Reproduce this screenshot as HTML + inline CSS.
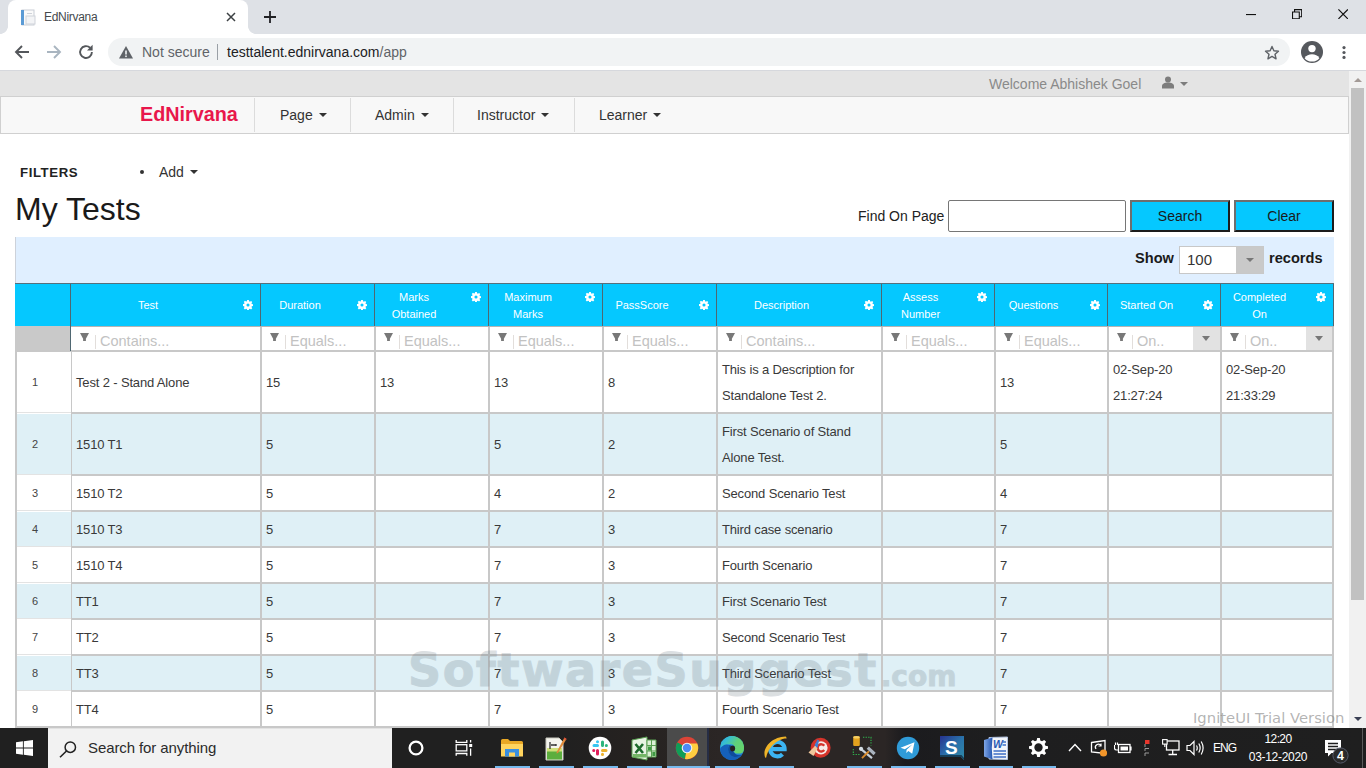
<!DOCTYPE html>
<html lang="en">
<head>
<meta charset="utf-8">
<title>EdNirvana</title>
<style>
*{box-sizing:border-box;margin:0;padding:0}
html,body{width:1366px;height:768px;overflow:hidden;background:#fff}
body{position:relative;font-family:"Liberation Sans",Arial,sans-serif;color:#222}
.abs{position:absolute}
/* ---------- chrome frame ---------- */
#tabstrip{left:0;top:0;width:1366px;height:34px;background:#dee1e6}
#tab{left:8px;top:0;width:240px;height:34px;background:#fff;border-radius:8px 8px 0 0}
#tab .title{left:36px;top:10px;font-size:12px;color:#45494d;letter-spacing:-.3px}
#toolbar{left:0;top:34px;width:1366px;height:37px;background:#fff;border-bottom:1px solid #d6d8dd}
#omni{left:108px;top:38px;width:1182px;height:28px;border-radius:14px;background:#f1f3f4}
#omni .ns{left:34px;top:6px;font-size:14px;color:#5f6368}
#omni .sep{left:109px;top:6px;width:1px;height:16px;background:#9aa0a6}
#omni .url{left:119px;top:6px;font-size:14px;color:#202124}
#omni .url span{color:#5f6368}
/* ---------- page ---------- */
#page{left:0;top:70px;width:1349px;height:658px;background:#fff;overflow:hidden}
#topbar{left:0;top:0;width:1349px;height:27px;background:#e4e4e4}
#topbar .welcome{left:989px;top:6px;font-size:14px;color:#8a8a8a}
#navbar{left:0;top:26px;width:1349px;height:38px;background:#f8f8f8;border:1px solid #d0d0d0}
#navbar .brand{left:139px;top:6px;font-size:19.8px;font-weight:bold;color:#e8174b}
#navbar .div{top:1px;width:1px;height:34px;background:#dcdcdc}
#navbar .item{top:10px;font-size:14px;color:#333}
.caret{display:inline-block;width:0;height:0;border-left:4px solid transparent;border-right:4px solid transparent;border-top:4px solid #333;vertical-align:middle;margin-left:2px;position:relative;top:-1px}
#filters{left:20px;top:95px;font-size:13.2px;font-weight:bold;color:#222;letter-spacing:.6px}
#bullet{left:140px;top:100px;width:4px;height:4px;border-radius:50%;background:#333}
#add{left:159px;top:94px;font-size:14px;color:#333}
#h1{left:15px;top:120px;font-size:32px;color:#1a1a1a;line-height:38px}
#find{left:858px;top:138px;font-size:14px;color:#222}
#findbox{left:948px;top:130px;width:178px;height:32px;border:1px solid #767676;border-radius:2px;background:#fff}
.btn{top:130px;width:100px;height:32px;background:#05c8ff;border:2px solid;border-color:#6e6e6e #1c1c1c #1c1c1c #6e6e6e;font-size:14px;color:#1a1a1a;text-align:center;line-height:28px}

/* ---------- grid ---------- */
.seg{font-family:"Liberation Sans",Arial,sans-serif}
#pager{background:#e0efff;border-left:1px solid #cdd2da}
.pgt{font-size:14.6px;font-weight:bold;color:#1a1a1a;line-height:22px}
#psel{width:85px;height:28px;background:#fff;border:1px solid #c8c8c8}
#psel span{position:absolute;left:7px;top:4px;font-size:15px;color:#333}
#psel i{position:absolute;right:0;top:0;width:27px;height:26px;background:#c9c9c9}
#psel i:after{content:"";position:absolute;left:10px;top:11px;border-left:4px solid transparent;border-right:4px solid transparent;border-top:4px solid #777}
#ghead{background:#05c8ff;border-top:1px solid #56707c}
#gfilt{background:#fff;border-top:1px solid #b5b5b5;border-bottom:2px solid #c8c8c8}
.hline{width:1px;background:#4f6772}
.hc{height:42px;display:flex;align-items:center;justify-content:center;text-align:center;color:#fff;font-size:11px;line-height:17px}
.hc.two{padding-top:1.5px}
.gear{width:10px;height:10px;display:block}
.fun{width:9px;height:8px;display:block}
.fpipe{width:1px;height:13.5px;background:#e2dedb}
.ftxt{font-size:14.5px;color:#c2c2c2;line-height:20px}
.fdd{width:27px;height:23px;background:#e2e2e2}
.fdd i{position:absolute;left:9px;top:9px;border-left:4.500px solid transparent;border-right:4.5px solid transparent;border-top:5px solid #777}
.grow{left:17px;width:1316px;background:#fff}
.grow.alt{background:#dff0f6}
.rnum{left:17px;width:54px;display:flex;align-items:center;justify-content:center;font-size:11px;color:#444;padding-right:18px;padding-top:0}
.gc{display:flex;align-items:center;font-size:13px;color:#393939;line-height:26px;white-space:nowrap;letter-spacing:-.15px;padding-top:2px}
.rline{left:72px;width:1262px;height:2px;background:#c8c8c8}
.rline0{left:17px;width:54px;height:1px;background:#e3e3e3}
.vline{width:2px;height:400px;background:#c8c8c8}

/* ---------- taskbar ---------- */
#taskbar{left:0;top:728px;width:1366px;height:40px;background:linear-gradient(90deg,#202020 0,#202020 560px,#262220 640px,#2b2625 720px,#2b2625 885px,#1b1b1e 905px,#1e1e1f 1000px,#1f1f1f 1366px);overflow:hidden}
#tsearch{left:48px;top:0;width:344px;height:40px;background:#f2f2f2;border-top:1px solid #e2e2e2}
.ul{top:38px;width:35px;height:2px;background:#76b9ed}
.tt{font-size:12px;color:#fff;white-space:nowrap;line-height:14px}
/* scrollbar */
#sb{left:1349px;top:71px;width:17px;height:657px;background:#f1f1f1}
#sb .thumb{left:2px;top:17px;width:13px;height:512px;background:#c1c1c1}

#wm{left:408px;top:572px;font-family:"DejaVu Sans","Liberation Sans",sans-serif;font-weight:bold;font-size:46px;line-height:56px;color:#5c6b78;-webkit-text-stroke:1px #5c6b78;opacity:.21;white-space:nowrap;letter-spacing:1.55px}
#wm span{font-size:28px;letter-spacing:0;margin-left:3px}
#ign{left:1193px;top:639px;font-family:"DejaVu Sans","Liberation Sans",sans-serif;font-size:14.8px;line-height:18px;color:rgba(130,130,130,.6);white-space:nowrap}

.flare{top:26px;width:8px;height:8px}
</style>
</head>
<body>
<!-- ===== Chrome tab strip ===== -->
<div id="tabstrip" class="abs"></div>
<div class="abs flare" style="left:0;background:radial-gradient(circle at 0 0,#dee1e6 7.6px,#fff 8.2px)"></div><div class="abs flare" style="left:248px;background:radial-gradient(circle at 100% 0,#dee1e6 7.6px,#fff 8.2px)"></div>
<div id="tab" class="abs">
  <svg class="abs" style="left:12px;top:9px" width="18" height="17" viewBox="0 0 18 17"><rect x="2" y="1" width="12" height="15" fill="#fafafa" stroke="#c9ced6" stroke-width="1"/><rect x="1" y="1" width="3" height="15" fill="#5b9bd5"/><rect x="6" y="7" width="9" height="8" fill="#f3f4f6" stroke="#cfd3da" stroke-width="1"/><rect x="7" y="4" width="5" height="1" fill="#cfd3da"/></svg>
  <div class="abs title">EdNirvana</div>
  <svg class="abs" style="left:218px;top:12px" width="10" height="10" viewBox="0 0 10 10"><path d="M1 1L9 9M9 1L1 9" stroke="#3c4043" stroke-width="1.5" fill="none"/></svg>
</div>
<svg class="abs" style="left:263px;top:10px" width="14" height="14" viewBox="0 0 14 14"><path d="M7 1V13M1 7H13" stroke="#202124" stroke-width="1.8" fill="none"/></svg>
<!-- window controls -->
<svg class="abs" style="left:1246px;top:14px" width="12" height="2"><rect width="10" height="1.100" fill="#111"/></svg>
<svg class="abs" style="left:1292px;top:9px" width="10.300" height="10.300" viewBox="0 0 12 12"><path d="M.600 3.500H8.500V11.400H.600ZM3 3.500V.700H11.300V9H8.500" stroke="#111" stroke-width="1.300" fill="none"/></svg>
<svg class="abs" style="left:1338px;top:9px" width="10.300" height="10.300" viewBox="0 0 12 12"><path d="M.500 .500L11.500 11.500M11.500 .500L.500 11.500" stroke="#111" stroke-width="1.400" fill="none"/></svg>
<!-- ===== Toolbar ===== -->
<div id="toolbar" class="abs"></div>
<svg class="abs" style="left:14px;top:44px" width="16" height="16" viewBox="0 0 16 16"><path d="M15 8H2.500M8 2L2 8L8 14" stroke="#54575b" stroke-width="1.9" fill="none"/></svg>
<svg class="abs" style="left:46px;top:44px" width="16" height="16" viewBox="0 0 16 16"><path d="M1 8H13.5M8 2L14 8L8 14" stroke="#a9b5c0" stroke-width="1.9" fill="none"/></svg>
<svg class="abs" style="left:78px;top:44px" width="16" height="16" viewBox="0 0 16 16"><path d="M13.900 8A5.900 5.900 0 1 1 12.100 3.800" stroke="#54575b" stroke-width="1.900" fill="none"/><path d="M14.600 .800V6.400H9Z" fill="#54575b"/></svg>
<div id="omni" class="abs">
  <svg class="abs" style="left:11px;top:8px" width="14" height="13" viewBox="0 0 14 13"><path d="M7 0L14 12.5H0Z" fill="#5f6368"/><rect x="6.2" y="4.5" width="1.6" height="4" fill="#f1f3f4"/><rect x="6.2" y="9.5" width="1.6" height="1.6" fill="#f1f3f4"/></svg>
  <div class="abs ns">Not secure</div>
  <div class="abs sep"></div>
  <div class="abs url">testtalent.ednirvana.com<span>/app</span></div>
  <svg class="abs" style="left:1156px;top:6.500px" width="16" height="15" viewBox="0 0 17 16"><path d="M8.5 1.6L10.5 6.1L15.4 6.6L11.7 9.9L12.8 14.7L8.5 12.2L4.2 14.7L5.3 9.9L1.6 6.6L6.5 6.1Z" stroke="#5f6368" stroke-width="1.5" fill="none" stroke-linejoin="round"/></svg>
</div>
<svg class="abs" style="left:1300px;top:40px" width="24" height="24" viewBox="0 0 24 24"><circle cx="12" cy="12" r="11" fill="#55585d"/><circle cx="12" cy="8.6" r="3.7" fill="#fff"/><path d="M4.6 18.2C6.2 15.4 9 14.3 12 14.3S17.8 15.4 19.4 18.2C17.6 20.4 15 21.6 12 21.6S6.4 20.4 4.6 18.2Z" fill="#fff"/></svg>
<svg class="abs" style="left:1342px;top:45px" width="4" height="15" viewBox="0 0 4 15"><circle cx="2" cy="2.600" r="1.600" fill="#55585d"/><circle cx="2" cy="7.500" r="1.600" fill="#55585d"/><circle cx="2" cy="12.400" r="1.600" fill="#55585d"/></svg>

<!-- ===== Page ===== -->
<div id="page" class="abs">
  <div id="topbar" class="abs">
    <div class="abs welcome">Welcome Abhishek Goel</div>
    <svg class="abs" style="left:1162px;top:6px" width="12" height="13" viewBox="0 0 12 13"><circle cx="6" cy="3.6" r="3" fill="#7d7d7d"/><path d="M0 12.5V10C0 7.6 2.5 6.4 6 6.4S12 7.6 12 10V12.5Z" fill="#7d7d7d"/></svg>
    <svg class="abs" style="left:1180px;top:12px" width="8" height="4.500" viewBox="0 0 9 5"><path d="M0 0H9L4.500 4.500Z" fill="#7d7d7d"/></svg>
  </div>
  <div id="navbar" class="abs">
    <div class="abs brand">EdNirvana</div>
    <div class="abs div" style="left:253px"></div>
    <div class="abs item" style="left:279px">Page <span class="caret"></span></div>
    <div class="abs div" style="left:349px"></div>
    <div class="abs item" style="left:374px">Admin <span class="caret"></span></div>
    <div class="abs div" style="left:452px"></div>
    <div class="abs item" style="left:476px">Instructor <span class="caret"></span></div>
    <div class="abs div" style="left:573px"></div>
    <div class="abs item" style="left:598px">Learner <span class="caret"></span></div>
  </div>
  <div id="filters" class="abs">FILTERS</div>
  <div id="bullet" class="abs"></div>
  <div id="add" class="abs">Add <span class="caret"></span></div>
  <div id="h1" class="abs">My Tests</div>
  <div id="find" class="abs">Find On Page</div>
  <div id="findbox" class="abs"></div>
  <div class="abs btn" style="left:1130px">Search</div>
  <div class="abs btn" style="left:1234px">Clear</div>
  <!--GRID-->
  <div class="abs" id="pager" style="left:15px;top:167px;width:1319px;height:46px"></div>
  <div class="abs pgt" style="left:1135px;top:177px">Show</div>
  <div class="abs" id="psel" style="left:1179px;top:176px"><span>100</span><i></i></div>
  <div class="abs pgt" style="left:1269px;top:177px">records</div>
  <div class="abs" id="ghead" style="left:15px;top:213px;width:1319px;height:43px"></div>
  <div class="abs" id="gfilt" style="left:15px;top:256px;width:1319px;height:26px"></div>
  <div class="abs" style="left:15px;top:256px;width:55px;height:24px;background:#c9c9c9"></div>
  <div class="abs hline" style="left:70px;top:214px;height:67px"></div>
  <div class="abs hc" style="left:71px;top:214px;width:154px">Test</div>
  <div class="abs" style="left:243px;top:229.5px"><svg class="gear" viewBox="0 0 20 20"><path fill="#fff" fill-rule="evenodd" d="M8.3 0h3.4l.5 2.6 1.7.7L16.1 1.8l2.4 2.4-1.5 2.2.7 1.7 2.6.5v3.4l-2.6.5-.7 1.7 1.5 2.2-2.4 2.4-2.2-1.5-1.7.7-.5 2.6H8.3l-.5-2.6-1.7-.7-2.2 1.5-2.4-2.4 1.5-2.2-.7-1.7L-.3 11.7V8.3l2.6-.5.7-1.7L1.5 3.9 3.9 1.5l2.2 1.5 1.7-.7ZM10 6.900a3.100 3.100 0 1 0 0 6.200 3.100 3.100 0 0 0 0-6.200Z"/></svg></div>
  <div class="abs" style="left:80px;top:263.4px"><svg class="fun" viewBox="0 0 9 8"><path fill="#787878" d="M0 0H9L5.900 5.800V8H3.100V5.800Z"/></svg></div>
  <div class="abs fpipe" style="left:95px;top:265px"></div>
  <div class="abs ftxt" style="left:100px;top:261px">Contains...</div>
  <div class="abs hline" style="left:260px;top:214px;height:42px"></div>
  <div class="abs hc" style="left:261px;top:214px;width:78px">Duration</div>
  <div class="abs" style="left:357px;top:229.5px"><svg class="gear" viewBox="0 0 20 20"><path fill="#fff" fill-rule="evenodd" d="M8.3 0h3.4l.5 2.6 1.7.7L16.1 1.8l2.4 2.4-1.5 2.2.7 1.7 2.6.5v3.4l-2.6.5-.7 1.7 1.5 2.2-2.4 2.4-2.2-1.5-1.7.7-.5 2.6H8.3l-.5-2.6-1.7-.7-2.2 1.5-2.4-2.4 1.5-2.2-.7-1.7L-.3 11.7V8.3l2.6-.5.7-1.7L1.5 3.9 3.9 1.5l2.2 1.5 1.7-.7ZM10 6.900a3.100 3.100 0 1 0 0 6.200 3.100 3.100 0 0 0 0-6.200Z"/></svg></div>
  <div class="abs" style="left:270px;top:263.4px"><svg class="fun" viewBox="0 0 9 8"><path fill="#787878" d="M0 0H9L5.900 5.800V8H3.100V5.800Z"/></svg></div>
  <div class="abs fpipe" style="left:285px;top:265px"></div>
  <div class="abs ftxt" style="left:290px;top:261px">Equals...</div>
  <div class="abs hline" style="left:374px;top:214px;height:42px"></div>
  <div class="abs hc two" style="left:375px;top:214px;width:78px">Marks<br>Obtained</div>
  <div class="abs" style="left:471px;top:221.5px"><svg class="gear" viewBox="0 0 20 20"><path fill="#fff" fill-rule="evenodd" d="M8.3 0h3.4l.5 2.6 1.7.7L16.1 1.8l2.4 2.4-1.5 2.2.7 1.7 2.6.5v3.4l-2.6.5-.7 1.7 1.5 2.2-2.4 2.4-2.2-1.5-1.7.7-.5 2.6H8.3l-.5-2.6-1.7-.7-2.2 1.5-2.4-2.4 1.5-2.2-.7-1.7L-.3 11.7V8.3l2.6-.5.7-1.7L1.5 3.9 3.9 1.5l2.2 1.5 1.7-.7ZM10 6.900a3.100 3.100 0 1 0 0 6.200 3.100 3.100 0 0 0 0-6.200Z"/></svg></div>
  <div class="abs" style="left:384px;top:263.4px"><svg class="fun" viewBox="0 0 9 8"><path fill="#787878" d="M0 0H9L5.900 5.800V8H3.100V5.800Z"/></svg></div>
  <div class="abs fpipe" style="left:399px;top:265px"></div>
  <div class="abs ftxt" style="left:404px;top:261px">Equals...</div>
  <div class="abs hline" style="left:488px;top:214px;height:42px"></div>
  <div class="abs hc two" style="left:489px;top:214px;width:78px">Maximum<br>Marks</div>
  <div class="abs" style="left:585px;top:221.5px"><svg class="gear" viewBox="0 0 20 20"><path fill="#fff" fill-rule="evenodd" d="M8.3 0h3.4l.5 2.6 1.7.7L16.1 1.8l2.4 2.4-1.5 2.2.7 1.7 2.6.5v3.4l-2.6.5-.7 1.7 1.5 2.2-2.4 2.4-2.2-1.5-1.7.7-.5 2.6H8.3l-.5-2.6-1.7-.7-2.2 1.5-2.4-2.4 1.5-2.2-.7-1.7L-.3 11.7V8.3l2.6-.5.7-1.7L1.5 3.9 3.9 1.5l2.2 1.5 1.7-.7ZM10 6.900a3.100 3.100 0 1 0 0 6.200 3.100 3.100 0 0 0 0-6.200Z"/></svg></div>
  <div class="abs" style="left:498px;top:263.4px"><svg class="fun" viewBox="0 0 9 8"><path fill="#787878" d="M0 0H9L5.900 5.800V8H3.100V5.800Z"/></svg></div>
  <div class="abs fpipe" style="left:513px;top:265px"></div>
  <div class="abs ftxt" style="left:518px;top:261px">Equals...</div>
  <div class="abs hline" style="left:602px;top:214px;height:42px"></div>
  <div class="abs hc" style="left:603px;top:214px;width:78px">PassScore</div>
  <div class="abs" style="left:699px;top:229.5px"><svg class="gear" viewBox="0 0 20 20"><path fill="#fff" fill-rule="evenodd" d="M8.3 0h3.4l.5 2.6 1.7.7L16.1 1.8l2.4 2.4-1.5 2.2.7 1.7 2.6.5v3.4l-2.6.5-.7 1.7 1.5 2.2-2.4 2.4-2.2-1.5-1.7.7-.5 2.6H8.3l-.5-2.6-1.7-.7-2.2 1.5-2.4-2.4 1.5-2.2-.7-1.7L-.3 11.7V8.3l2.6-.5.7-1.7L1.5 3.9 3.9 1.5l2.2 1.5 1.7-.7ZM10 6.900a3.100 3.100 0 1 0 0 6.200 3.100 3.100 0 0 0 0-6.200Z"/></svg></div>
  <div class="abs" style="left:612px;top:263.4px"><svg class="fun" viewBox="0 0 9 8"><path fill="#787878" d="M0 0H9L5.900 5.800V8H3.100V5.800Z"/></svg></div>
  <div class="abs fpipe" style="left:627px;top:265px"></div>
  <div class="abs ftxt" style="left:632px;top:261px">Equals...</div>
  <div class="abs hline" style="left:716px;top:214px;height:42px"></div>
  <div class="abs hc" style="left:717px;top:214px;width:129px">Description</div>
  <div class="abs" style="left:864px;top:229.5px"><svg class="gear" viewBox="0 0 20 20"><path fill="#fff" fill-rule="evenodd" d="M8.3 0h3.4l.5 2.6 1.7.7L16.1 1.8l2.4 2.4-1.5 2.2.7 1.7 2.6.5v3.4l-2.6.5-.7 1.7 1.5 2.2-2.4 2.4-2.2-1.5-1.7.7-.5 2.6H8.3l-.5-2.6-1.7-.7-2.2 1.5-2.4-2.4 1.5-2.2-.7-1.7L-.3 11.7V8.3l2.6-.5.7-1.7L1.5 3.9 3.9 1.5l2.2 1.5 1.7-.7ZM10 6.900a3.100 3.100 0 1 0 0 6.200 3.100 3.100 0 0 0 0-6.200Z"/></svg></div>
  <div class="abs" style="left:726px;top:263.4px"><svg class="fun" viewBox="0 0 9 8"><path fill="#787878" d="M0 0H9L5.900 5.800V8H3.100V5.800Z"/></svg></div>
  <div class="abs fpipe" style="left:741px;top:265px"></div>
  <div class="abs ftxt" style="left:746px;top:261px">Contains...</div>
  <div class="abs hline" style="left:881px;top:214px;height:42px"></div>
  <div class="abs hc two" style="left:882px;top:214px;width:77px">Assess<br>Number</div>
  <div class="abs" style="left:977px;top:221.5px"><svg class="gear" viewBox="0 0 20 20"><path fill="#fff" fill-rule="evenodd" d="M8.3 0h3.4l.5 2.6 1.7.7L16.1 1.8l2.4 2.4-1.5 2.2.7 1.7 2.6.5v3.4l-2.6.5-.7 1.7 1.5 2.2-2.4 2.4-2.2-1.5-1.7.7-.5 2.6H8.3l-.5-2.6-1.7-.7-2.2 1.5-2.4-2.4 1.5-2.2-.7-1.7L-.3 11.7V8.3l2.6-.5.7-1.7L1.5 3.9 3.9 1.5l2.2 1.5 1.7-.7ZM10 6.900a3.100 3.100 0 1 0 0 6.200 3.100 3.100 0 0 0 0-6.200Z"/></svg></div>
  <div class="abs" style="left:891px;top:263.4px"><svg class="fun" viewBox="0 0 9 8"><path fill="#787878" d="M0 0H9L5.900 5.800V8H3.100V5.800Z"/></svg></div>
  <div class="abs fpipe" style="left:906px;top:265px"></div>
  <div class="abs ftxt" style="left:911px;top:261px">Equals...</div>
  <div class="abs hline" style="left:994px;top:214px;height:42px"></div>
  <div class="abs hc" style="left:995px;top:214px;width:77px">Questions</div>
  <div class="abs" style="left:1090px;top:229.5px"><svg class="gear" viewBox="0 0 20 20"><path fill="#fff" fill-rule="evenodd" d="M8.3 0h3.4l.5 2.6 1.7.7L16.1 1.8l2.4 2.4-1.5 2.2.7 1.7 2.6.5v3.4l-2.6.5-.7 1.7 1.5 2.2-2.4 2.4-2.2-1.5-1.7.7-.5 2.6H8.3l-.5-2.6-1.7-.7-2.2 1.5-2.4-2.4 1.5-2.2-.7-1.7L-.3 11.7V8.3l2.6-.5.7-1.7L1.5 3.9 3.9 1.5l2.2 1.5 1.7-.7ZM10 6.900a3.100 3.100 0 1 0 0 6.200 3.100 3.100 0 0 0 0-6.200Z"/></svg></div>
  <div class="abs" style="left:1004px;top:263.4px"><svg class="fun" viewBox="0 0 9 8"><path fill="#787878" d="M0 0H9L5.900 5.800V8H3.100V5.800Z"/></svg></div>
  <div class="abs fpipe" style="left:1019px;top:265px"></div>
  <div class="abs ftxt" style="left:1024px;top:261px">Equals...</div>
  <div class="abs hline" style="left:1107px;top:214px;height:42px"></div>
  <div class="abs hc" style="left:1108px;top:214px;width:77px">Started On</div>
  <div class="abs" style="left:1203px;top:229.5px"><svg class="gear" viewBox="0 0 20 20"><path fill="#fff" fill-rule="evenodd" d="M8.3 0h3.4l.5 2.6 1.7.7L16.1 1.8l2.4 2.4-1.5 2.2.7 1.7 2.6.5v3.4l-2.6.5-.7 1.7 1.5 2.2-2.4 2.4-2.2-1.5-1.7.7-.5 2.6H8.3l-.5-2.6-1.7-.7-2.2 1.5-2.4-2.4 1.5-2.2-.7-1.7L-.3 11.7V8.3l2.6-.5.7-1.7L1.5 3.9 3.9 1.5l2.2 1.5 1.7-.7ZM10 6.900a3.100 3.100 0 1 0 0 6.200 3.100 3.100 0 0 0 0-6.200Z"/></svg></div>
  <div class="abs" style="left:1117px;top:263.4px"><svg class="fun" viewBox="0 0 9 8"><path fill="#787878" d="M0 0H9L5.900 5.800V8H3.100V5.800Z"/></svg></div>
  <div class="abs fpipe" style="left:1132px;top:265px"></div>
  <div class="abs ftxt" style="left:1137px;top:261px">On..</div>
  <div class="abs fdd" style="left:1193px;top:257px"><i></i></div>
  <div class="abs hline" style="left:1220px;top:214px;height:42px"></div>
  <div class="abs hc two" style="left:1221px;top:214px;width:77px">Completed<br>On</div>
  <div class="abs" style="left:1316px;top:221.5px"><svg class="gear" viewBox="0 0 20 20"><path fill="#fff" fill-rule="evenodd" d="M8.3 0h3.4l.5 2.6 1.7.7L16.1 1.8l2.4 2.4-1.5 2.2.7 1.7 2.6.5v3.4l-2.6.5-.7 1.7 1.5 2.2-2.4 2.4-2.2-1.5-1.7.7-.5 2.6H8.3l-.5-2.6-1.7-.7-2.2 1.5-2.4-2.4 1.5-2.2-.7-1.7L-.3 11.7V8.3l2.6-.5.7-1.7L1.5 3.9 3.9 1.5l2.2 1.5 1.7-.7ZM10 6.900a3.100 3.100 0 1 0 0 6.200 3.100 3.100 0 0 0 0-6.200Z"/></svg></div>
  <div class="abs" style="left:1230px;top:263.4px"><svg class="fun" viewBox="0 0 9 8"><path fill="#787878" d="M0 0H9L5.900 5.800V8H3.100V5.800Z"/></svg></div>
  <div class="abs fpipe" style="left:1245px;top:265px"></div>
  <div class="abs ftxt" style="left:1250px;top:261px">On..</div>
  <div class="abs fdd" style="left:1306px;top:257px"><i></i></div>
  <div class="abs hline" style="left:1333px;top:214px;height:42px"></div>
  <div class="abs grow" style="top:282px;height:60px"></div>
  <div class="abs rnum" style="top:282px;height:60px">1</div>
  <div class="abs gc" style="left:76px;top:282px;height:60px"><span>Test 2 - Stand Alone</span></div>
  <div class="abs gc" style="left:266px;top:282px;height:60px"><span>15</span></div>
  <div class="abs gc" style="left:380px;top:282px;height:60px"><span>13</span></div>
  <div class="abs gc" style="left:494px;top:282px;height:60px"><span>13</span></div>
  <div class="abs gc" style="left:608px;top:282px;height:60px"><span>8</span></div>
  <div class="abs gc" style="left:722px;top:282px;height:60px"><span>This is a Description for<br>Standalone Test 2.</span></div>
  <div class="abs gc" style="left:1000px;top:282px;height:60px"><span>13</span></div>
  <div class="abs gc" style="left:1113px;top:282px;height:60px"><span>02-Sep-20<br>21:27:24</span></div>
  <div class="abs gc" style="left:1226px;top:282px;height:60px"><span>02-Sep-20<br>21:33:29</span></div>
  <div class="abs rline" style="top:342px"></div>
  <div class="abs rline0" style="top:342px"></div>
  <div class="abs grow alt" style="top:344px;height:60px"></div>
  <div class="abs rnum" style="top:344px;height:60px">2</div>
  <div class="abs gc" style="left:76px;top:344px;height:60px"><span>1510 T1</span></div>
  <div class="abs gc" style="left:266px;top:344px;height:60px"><span>5</span></div>
  <div class="abs gc" style="left:494px;top:344px;height:60px"><span>5</span></div>
  <div class="abs gc" style="left:608px;top:344px;height:60px"><span>2</span></div>
  <div class="abs gc" style="left:722px;top:344px;height:60px"><span>First Scenario of Stand<br>Alone Test.</span></div>
  <div class="abs gc" style="left:1000px;top:344px;height:60px"><span>5</span></div>
  <div class="abs rline" style="top:404px"></div>
  <div class="abs rline0" style="top:404px"></div>
  <div class="abs grow" style="top:406px;height:34px"></div>
  <div class="abs rnum" style="top:406px;height:34px">3</div>
  <div class="abs gc" style="left:76px;top:406px;height:34px"><span>1510 T2</span></div>
  <div class="abs gc" style="left:266px;top:406px;height:34px"><span>5</span></div>
  <div class="abs gc" style="left:494px;top:406px;height:34px"><span>4</span></div>
  <div class="abs gc" style="left:608px;top:406px;height:34px"><span>2</span></div>
  <div class="abs gc" style="left:722px;top:406px;height:34px"><span>Second Scenario Test</span></div>
  <div class="abs gc" style="left:1000px;top:406px;height:34px"><span>4</span></div>
  <div class="abs rline" style="top:440px"></div>
  <div class="abs rline0" style="top:440px"></div>
  <div class="abs grow alt" style="top:442px;height:34px"></div>
  <div class="abs rnum" style="top:442px;height:34px">4</div>
  <div class="abs gc" style="left:76px;top:442px;height:34px"><span>1510 T3</span></div>
  <div class="abs gc" style="left:266px;top:442px;height:34px"><span>5</span></div>
  <div class="abs gc" style="left:494px;top:442px;height:34px"><span>7</span></div>
  <div class="abs gc" style="left:608px;top:442px;height:34px"><span>3</span></div>
  <div class="abs gc" style="left:722px;top:442px;height:34px"><span>Third case scenario</span></div>
  <div class="abs gc" style="left:1000px;top:442px;height:34px"><span>7</span></div>
  <div class="abs rline" style="top:476px"></div>
  <div class="abs rline0" style="top:476px"></div>
  <div class="abs grow" style="top:478px;height:34px"></div>
  <div class="abs rnum" style="top:478px;height:34px">5</div>
  <div class="abs gc" style="left:76px;top:478px;height:34px"><span>1510 T4</span></div>
  <div class="abs gc" style="left:266px;top:478px;height:34px"><span>5</span></div>
  <div class="abs gc" style="left:494px;top:478px;height:34px"><span>7</span></div>
  <div class="abs gc" style="left:608px;top:478px;height:34px"><span>3</span></div>
  <div class="abs gc" style="left:722px;top:478px;height:34px"><span>Fourth Scenario</span></div>
  <div class="abs gc" style="left:1000px;top:478px;height:34px"><span>7</span></div>
  <div class="abs rline" style="top:512px"></div>
  <div class="abs rline0" style="top:512px"></div>
  <div class="abs grow alt" style="top:514px;height:34px"></div>
  <div class="abs rnum" style="top:514px;height:34px">6</div>
  <div class="abs gc" style="left:76px;top:514px;height:34px"><span>TT1</span></div>
  <div class="abs gc" style="left:266px;top:514px;height:34px"><span>5</span></div>
  <div class="abs gc" style="left:494px;top:514px;height:34px"><span>7</span></div>
  <div class="abs gc" style="left:608px;top:514px;height:34px"><span>3</span></div>
  <div class="abs gc" style="left:722px;top:514px;height:34px"><span>First Scenario Test</span></div>
  <div class="abs gc" style="left:1000px;top:514px;height:34px"><span>7</span></div>
  <div class="abs rline" style="top:548px"></div>
  <div class="abs rline0" style="top:548px"></div>
  <div class="abs grow" style="top:550px;height:34px"></div>
  <div class="abs rnum" style="top:550px;height:34px">7</div>
  <div class="abs gc" style="left:76px;top:550px;height:34px"><span>TT2</span></div>
  <div class="abs gc" style="left:266px;top:550px;height:34px"><span>5</span></div>
  <div class="abs gc" style="left:494px;top:550px;height:34px"><span>7</span></div>
  <div class="abs gc" style="left:608px;top:550px;height:34px"><span>3</span></div>
  <div class="abs gc" style="left:722px;top:550px;height:34px"><span>Second Scenario Test</span></div>
  <div class="abs gc" style="left:1000px;top:550px;height:34px"><span>7</span></div>
  <div class="abs rline" style="top:584px"></div>
  <div class="abs rline0" style="top:584px"></div>
  <div class="abs grow alt" style="top:586px;height:34px"></div>
  <div class="abs rnum" style="top:586px;height:34px">8</div>
  <div class="abs gc" style="left:76px;top:586px;height:34px"><span>TT3</span></div>
  <div class="abs gc" style="left:266px;top:586px;height:34px"><span>5</span></div>
  <div class="abs gc" style="left:494px;top:586px;height:34px"><span>7</span></div>
  <div class="abs gc" style="left:608px;top:586px;height:34px"><span>3</span></div>
  <div class="abs gc" style="left:722px;top:586px;height:34px"><span>Third Scenario Test</span></div>
  <div class="abs gc" style="left:1000px;top:586px;height:34px"><span>7</span></div>
  <div class="abs rline" style="top:620px"></div>
  <div class="abs rline0" style="top:620px"></div>
  <div class="abs grow" style="top:622px;height:34px"></div>
  <div class="abs rnum" style="top:622px;height:34px">9</div>
  <div class="abs gc" style="left:76px;top:622px;height:34px"><span>TT4</span></div>
  <div class="abs gc" style="left:266px;top:622px;height:34px"><span>5</span></div>
  <div class="abs gc" style="left:494px;top:622px;height:34px"><span>7</span></div>
  <div class="abs gc" style="left:608px;top:622px;height:34px"><span>3</span></div>
  <div class="abs gc" style="left:722px;top:622px;height:34px"><span>Fourth Scenario Test</span></div>
  <div class="abs gc" style="left:1000px;top:622px;height:34px"><span>7</span></div>
  <div class="abs rline" style="top:656px"></div>
  <div class="abs rline0" style="top:656px;height:2px;background:#c8c8c8"></div>
  <div class="abs vline" style="left:15px;top:282px"></div>
  <div class="abs" style="left:71px;top:282px;width:1px;height:400px;background:#c8c8c8"></div>
  <div class="abs vline" style="left:260px;top:257px"></div>
  <div class="abs vline" style="left:374px;top:257px"></div>
  <div class="abs vline" style="left:488px;top:257px"></div>
  <div class="abs vline" style="left:602px;top:257px"></div>
  <div class="abs vline" style="left:716px;top:257px"></div>
  <div class="abs vline" style="left:881px;top:257px"></div>
  <div class="abs vline" style="left:994px;top:257px"></div>
  <div class="abs vline" style="left:1107px;top:257px"></div>
  <div class="abs vline" style="left:1220px;top:257px"></div>
  <div class="abs vline" style="left:1332px;top:257px"></div>
  <!--/GRID-->
  <div id="wm" class="abs">SoftwareSuggest<span>.com</span></div>
  <div id="ign" class="abs">IgniteUI Trial Version</div>
</div>
<div class="abs" style="left:0;top:70px;width:1366px;height:1px;background:#d6d8dd"></div>
<div id="sb" class="abs"><div class="abs thumb"></div>
  <svg class="abs" style="left:5px;top:7px" width="8" height="4" viewBox="0 0 8 4"><path d="M0 4L4 0L8 4Z" fill="#a39a96"/></svg>
  <svg class="abs" style="left:5px;top:646px" width="8" height="4" viewBox="0 0 8 4"><path d="M0 0L4 4L8 0Z" fill="#3a4055"/></svg>
</div>
<!--TASKBAR-->
  <div id="taskbar" class="abs">
  <!-- start -->
  <svg class="abs" style="left:16px;top:12px" width="17" height="16" viewBox="0 0 17 16"><path fill="#fff" d="M0 2.300L6.900 1.300V7.600H0ZM7.800 1.200L17 0V7.600H7.800ZM0 8.400H6.900V14.700L0 13.700ZM7.800 8.400H17V16L7.800 14.800Z"/></svg>
  <div class="abs" id="tsearch">
    <svg class="abs" style="left:11px;top:12px" width="18" height="17" viewBox="0 0 18 17"><circle cx="11.300" cy="6.200" r="5.200" fill="none" stroke="#222" stroke-width="1.500"/><path d="M7.500 10L1 16.300" stroke="#222" stroke-width="1.600"/></svg>
    <div class="abs" style="left:40px;top:10px;font-size:15px;color:#2b2b2b;white-space:nowrap;letter-spacing:-.1px">Search for anything</div>
  </div>
  <!-- cortana -->
  <svg class="abs" style="left:407px;top:11px" width="18" height="18" viewBox="0 0 18 18"><circle cx="9" cy="9" r="6.400" fill="none" stroke="#fff" stroke-width="2.300"/></svg>
  <!-- task view -->
  <svg class="abs" style="left:455px;top:11px" width="18" height="18" viewBox="0 0 18 18"><path d="M1.200 1V3.300H11.800V1M1.200 16.800V14.500H11.800V16.800" stroke="#fff" stroke-width="1.300" fill="none"/><rect x="1.200" y="5.700" width="10.600" height="6.200" fill="none" stroke="#fff" stroke-width="1.300"/><path d="M15.600 1V3.600M15.600 9.500V16.800" stroke="#fff" stroke-width="1.300"/><rect x="14.200" y="5" width="3" height="3" fill="#fff"/></svg>
  <!-- underlines -->
  <div class="abs ul" style="left:495px"></div><div class="abs ul" style="left:539px"></div><div class="abs ul" style="left:583px"></div><div class="abs ul" style="left:627px"></div>
  <div class="abs" style="left:667px;top:0;width:40px;height:40px;background:#4b4b4b"></div>
  <div class="abs" style="left:707px;top:0;width:2px;height:40px;background:#262d45"></div>
  <div class="abs ul" style="left:667px;width:43px"></div>
  <div class="abs ul" style="left:715px"></div><div class="abs ul" style="left:759px"></div><div class="abs ul" style="left:847px"></div><div class="abs ul" style="left:891px"></div><div class="abs ul" style="left:935px"></div><div class="abs ul" style="left:979px;width:34px"></div><div class="abs ul" style="left:1022px;width:34px"></div>
  <!-- file explorer -->
  <svg class="abs" style="left:500px;top:10px" width="24" height="20" viewBox="0 0 24 20"><path d="M1 2.500Q1 1 2.500 1H8L10 3H21.500Q23 3 23 4.500V18H1Z" fill="#e9a825"/><path d="M1 6H23V18.500H1Z" fill="#ffd45e"/><path d="M5 11H19V18.500H5Z" fill="#3a8fe0"/><path d="M9 14.500H15V18.500H9Z" fill="#ffd45e"/></svg>
  <!-- notepad-like -->
  <svg class="abs" style="left:544px;top:8px" width="24" height="26" viewBox="0 0 24 26"><path d="M2 2H15L19 6V24H2Z" fill="#f4f4ee" stroke="#c9c9bf" stroke-width="1"/><rect x="3" y="15" width="15" height="8.500" fill="#5cae3e"/><rect x="3" y="12" width="15" height="3.500" fill="#cfe07a"/><path d="M6 6V13M7 9H12M12 8V10" stroke="#333" stroke-width="1.300" fill="none"/><path d="M20.500 1.500L22.500 3L14 17L12.500 17.500L12.800 15.800Z" fill="#e08b3a"/><path d="M20.500 1.500L22.500 3L21.800 4.200L19.800 2.800Z" fill="#d9473b"/></svg>
  <!-- slack -->
  <svg class="abs" style="left:588px;top:8px" width="24" height="24" viewBox="0 0 24 24"><circle cx="12" cy="12" r="11.300" fill="#fff"/><g stroke-width="3" stroke-linecap="round" fill="none"><path d="M6 9.500H9.500M9.500 5.700V5.800" stroke="#36c5f0"/><path d="M14.500 6V9.500M18.300 9.500H18.400" stroke="#2eb67d"/><path d="M14.500 14.500H18M14.500 18.300V18.400" stroke="#ecb22e"/><path d="M9.500 14.500V18M5.700 14.500H5.800" stroke="#e01e5a"/></g></svg>
  <!-- excel -->
  <svg class="abs" style="left:631px;top:8px" width="26" height="25" viewBox="0 0 26 25"><path d="M1 4L16 1V24L1 21Z" fill="#e8f3e4" stroke="#5aa052" stroke-width="1"/><path d="M16 4H25V21H16Z" fill="#dcefd6" stroke="#5aa052" stroke-width="1"/><path d="M16 9.500H25M16 15H25M20.500 4V21" stroke="#5aa052" stroke-width="1"/><rect x="17" y="10.500" width="3" height="4" fill="#3f9a43"/><rect x="21.300" y="16" width="3" height="4" fill="#3f9a43"/><path d="M4.500 8L12 17M12 8L4.500 17" stroke="#1d6a2c" stroke-width="2.600"/><rect x="2" y="18" width="13" height="3.500" fill="#55a646" opacity=".8"/></svg>
  <!-- chrome -->
  <svg class="abs" style="left:675px;top:8px" width="24" height="24" viewBox="0 0 24 24"><circle cx="12" cy="12" r="11.200" fill="#db4437"/><path d="M12 12L2.300 6.400A11.200 11.200 0 0 0 10 23L12 12Z" fill="#0f9d58"/><path d="M12 12L10 23A11.200 11.200 0 0 0 23.200 12A11 11 0 0 0 22.200 7.500H12Z" fill="#ffcd40"/><path d="M12 12L6.800 15 2.300 6.400Z" fill="#0f9d58"/><circle cx="12" cy="12" r="5.300" fill="#f1f1f1"/><circle cx="12" cy="12" r="4.200" fill="#4c8bf5"/></svg>
  <!-- edge -->
  <svg class="abs" style="left:720px;top:8px" width="24" height="24" viewBox="0 0 24 24"><defs><linearGradient id="eg1" x1="0" y1="0" x2="0" y2="1"><stop offset="0" stop-color="#35b6e6"/><stop offset="1" stop-color="#1a72cf"/></linearGradient><linearGradient id="eg2" x1="0" y1="0" x2="1" y2=".6"><stop offset="0" stop-color="#2fa0e6"/><stop offset=".3" stop-color="#37bfd0"/><stop offset=".65" stop-color="#5fd07a"/><stop offset="1" stop-color="#66d46c"/></linearGradient><clipPath id="ec"><circle cx="12" cy="12" r="12"/></clipPath></defs><g clip-path="url(#ec)"><rect width="24" height="24" fill="url(#eg1)"/><path d="M8 0H24V14C24 17 20 18 16.500 17.500C14 17 13.500 15.500 14.500 14C16 11.500 14.500 8.500 11 8C7 7.500 3 9.500 1 13V6Z" fill="url(#eg2)"/><path d="M0 13C2 9 6 7.500 9.500 9C7.500 11 7.500 16 10.500 19C13.500 22 19 21.500 22.500 18.500C20 23 15 25 10 24C4 23 0 19 0 13Z" fill="#1560ba"/><path d="M9.500 9C7.500 11 7.500 16 10.500 19C13.500 22 19 21.500 22.500 18.500C19 20 15.500 19 14.200 16.500C12.500 16 11.500 14 12 12C12.500 10 11 9 9.500 9Z" fill="#0f4c9c"/><ellipse cx="12.600" cy="12.600" rx="2.500" ry="3" fill="#25211f"/></g></svg>
  <!-- IE -->
  <svg class="abs" style="left:762px;top:6px" width="28" height="28" viewBox="0 0 28 28"><path d="M8.200 15.200H22.600A7.200 7.200 0 1 0 20.500 20.200" fill="none" stroke="#3cb4f2" stroke-width="4.200"/><path d="M3.200 23.800C-.5 14 10 3 23.600 2.600C24.500 3 24.600 4 24.300 4.800C23.500 3.500 8 7 4.200 23.500Z" fill="#f0b428"/></svg>
  <!-- ccleaner -->
  <svg class="abs" style="left:808px;top:8px" width="24" height="24" viewBox="0 0 24 24"><circle cx="12.600" cy="11.800" r="10" fill="#d5342b"/><circle cx="13" cy="11.800" r="6.600" fill="#f6ece8"/><path d="M16.200 9.800A3.600 3.600 0 1 0 16.200 14" stroke="#d5342b" stroke-width="2.400" fill="none"/><path d="M.5 16.500L7 10L9.500 12.500L5.500 20Z" fill="#efc79c"/><path d="M6.500 9.500L9.500 3.500L11 4.500L9.500 12Z" fill="#3f7ed1"/></svg>
  <!-- tools -->
  <svg class="abs" style="left:850px;top:6px" width="28" height="28" viewBox="0 0 28 28"><rect x="3.200" y="2.500" width="6.600" height="9.500" rx="1.200" fill="#e3a21e"/><ellipse cx="6.500" cy="3.200" rx="3.300" ry="1.300" fill="#f5cf63"/><path d="M13 3.300H21V11.500M3.300 15V20.500H10" stroke="#2fb84f" stroke-width="1.100" stroke-dasharray="1.300 1.300" fill="none"/><path d="M10.800 14.800L22 24.200" stroke="#c6cfd9" stroke-width="2.200"/><circle cx="11" cy="14.800" r="2.100" fill="#d5dce4"/><path d="M12 24.200L19 17.200" stroke="#d98a2b" stroke-width="1.900"/><path d="M17.800 13.600L24.600 20" stroke="#aab3be" stroke-width="3.200"/></svg>
  <!-- telegram -->
  <svg class="abs" style="left:896px;top:8px" width="24" height="24" viewBox="0 0 24 24"><circle cx="12" cy="12" r="11.200" fill="#2f9bd8"/><path d="M4.500 11.800L18.500 6.300L16.200 17.800L12.400 15L10.300 17L10.600 13.800L16.300 8.500L8.800 13.200Z" fill="#fff"/></svg>
  <!-- snagit -->
  <svg class="abs" style="left:939px;top:8px" width="26" height="25" viewBox="0 0 26 25"><defs><linearGradient id="sg" x1="0" y1="0" x2="1" y2="1"><stop offset="0" stop-color="#26318f"/><stop offset=".5" stop-color="#2a72ab"/><stop offset="1" stop-color="#2f8aa6"/></linearGradient></defs><path d="M1 0H25V24L22 21H1Z" fill="url(#sg)"/><path d="M1 19H22.500L25 22V24L22 21H1Z" fill="#173f58"/><text x="6" y="17.500" font-family="Liberation Sans,Arial,sans-serif" font-size="19" font-weight="bold" fill="#fff">S</text></svg>
  <!-- word -->
  <svg class="abs" style="left:983px;top:8px" width="26" height="25" viewBox="0 0 26 25"><defs><linearGradient id="wg" x1="0" y1="0" x2="1" y2="0"><stop offset="0" stop-color="#7fa6e6"/><stop offset="1" stop-color="#2456b0"/></linearGradient></defs><path d="M6 1.500L24.500 1V23.500L6 23Z" fill="#f3f6fb" stroke="#b4c3de" stroke-width="1"/><path d="M1 4L9.500 1.500Q8 12 9.500 23.500L1 20.500Z" fill="url(#wg)"/><text x="10" y="12" font-family="Liberation Sans,Arial,sans-serif" font-size="10.500" font-weight="bold" font-style="italic" fill="#2a5bb5">W</text><path d="M19.500 6H23M19.500 9H23M10.500 15H23M10.500 18H23M10.500 21H23" stroke="#3f6fc6" stroke-width="1.300"/></svg>
  <!-- settings -->
  <svg class="abs" style="left:1029px;top:10px" width="19" height="19" viewBox="0 0 20 20"><path fill="#fff" fill-rule="evenodd" d="M8.600 0h2.800l.5 2.700 1.800.8L16 2l2 2-1.500 2.300.8 1.800 2.700.5v2.800l-2.700.5-.8 1.800L18 16l-2 2-2.300-1.500-1.800.8-.5 2.700H8.600l-.5-2.700-1.800-.8L4 18l-2-2 1.500-2.300-.8-1.800L0 11.400V8.600l2.700-.5.800-1.800L2 4l2-2 2.300 1.500 1.800-.8ZM10 5.600a4.400 4.400 0 1 0 0 8.800 4.400 4.400 0 0 0 0-8.800Z"/></svg>
  <!-- tray -->
  <svg class="abs" style="left:1068px;top:15px" width="14" height="9" viewBox="0 0 14 9"><path d="M1 8L7 1.500L13 8" stroke="#fff" stroke-width="1.400" fill="none"/></svg>
  <svg class="abs" style="left:1090px;top:11px" width="18" height="18" viewBox="0 0 18 18"><path d="M1.500 3.500L15 1.500V14.500L1.500 13Z" fill="none" stroke="#fff" stroke-width="1.300"/><path d="M6 10A3 3 0 0 1 11 6.500M11 4.500V7H8.500" stroke="#fff" stroke-width="1.200" fill="none"/><circle cx="13.500" cy="14" r="3.600" fill="#f2962a"/></svg>
  <svg class="abs" style="left:1114px;top:14px" width="18" height="12" viewBox="0 0 18 12"><rect x="4.500" y="2.500" width="11.500" height="8" fill="none" stroke="#fff" stroke-width="1.300"/><rect x="6.500" y="4.500" width="7.500" height="4" fill="#fff"/><rect x="16" y="4.500" width="1.600" height="4" fill="#fff"/><path d="M.5 3V6Q.5 8 2.500 8H5M1.500 .5V3M3.500 .5V3" stroke="#fff" stroke-width="1.200" fill="none"/></svg>
  <svg class="abs" style="left:1144px;top:11px" width="7" height="18" viewBox="0 0 7 18"><rect x="1" y="1" width="4.500" height="4" fill="#e8362c"/><path d="M1 5V8M1 9.500H5M1 9.500V12M1 14H5M1 14V17" stroke="#9a9a9a" stroke-width="1" fill="none"/></svg>
  <svg class="abs" style="left:1162px;top:11px" width="18" height="17" viewBox="0 0 18 17"><rect x="4.500" y="2" width="12.500" height="9" fill="none" stroke="#fff" stroke-width="1.300"/><path d="M10.700 11V15M6.500 15.500H15" stroke="#fff" stroke-width="1.300"/><rect x=".6" y=".6" width="4.500" height="4.500" fill="#1f1f1f" stroke="#fff" stroke-width="1.100"/><path d="M2.800 5V8" stroke="#fff" stroke-width="1.100"/></svg>
  <svg class="abs" style="left:1186px;top:12px" width="19" height="16" viewBox="0 0 19 16"><path d="M1 5.500H4L8 1.500V14.500L4 10.500H1Z" fill="none" stroke="#fff" stroke-width="1.200"/><path d="M10.500 5.500Q12 8 10.500 10.500M12.800 3.500Q15.500 8 12.800 12.500M15.200 1.500Q19 8 15.200 14.500" stroke="#fff" stroke-width="1.200" fill="none"/></svg>
  <div class="abs tt" style="left:1213px;top:13px;letter-spacing:-1px">ENG</div>
  <div class="abs tt" style="left:1248px;top:4px;width:60px;text-align:center;letter-spacing:-.6px">12:20</div>
  <div class="abs tt" style="left:1243px;top:22px;width:70px;text-align:center;letter-spacing:-.3px">03-12-2020</div>
  <svg class="abs" style="left:1324px;top:11px" width="26" height="26" viewBox="0 0 26 26"><path d="M1 1H17V14H7.500L4 17.500V14H1Z" fill="#fff"/><path d="M4 4.500H14M4 7.500H14M4 10.500H14" stroke="#1f1f1f" stroke-width="1.300"/><circle cx="16.500" cy="16.500" r="7.600" fill="#2a2a2a" stroke="#555a6a" stroke-width="1"/><text x="13" y="21" font-family="Liberation Sans,Arial,sans-serif" font-size="12.500" font-weight="bold" fill="#fff">4</text></svg>
  <div class="abs" style="left:1362px;top:0;width:1px;height:40px;background:#5a5a5a"></div>
</div>

  <!--/TASKBAR-->
</body>
</html>
